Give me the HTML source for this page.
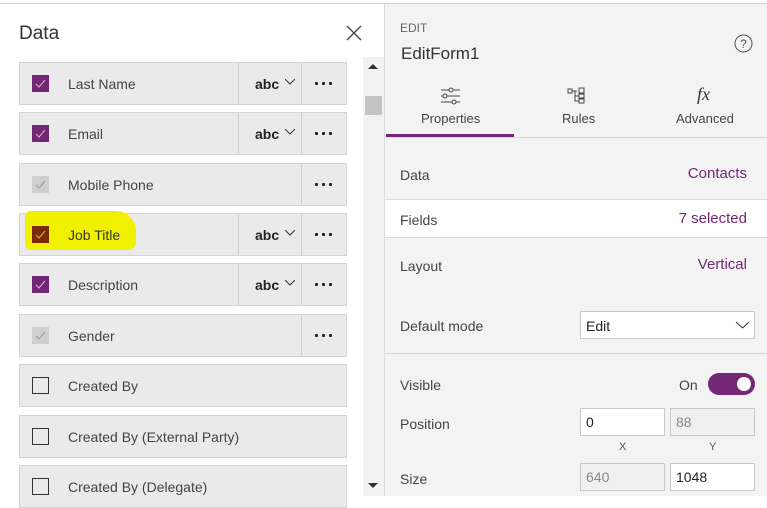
<!DOCTYPE html>
<html><head><style>
*{box-sizing:border-box;margin:0;padding:0}
body{width:767px;height:496px;overflow:hidden;background:#fff;font-family:"Liberation Sans",sans-serif;position:relative;color:#333}
.abs{position:absolute}
.row{position:absolute;left:19px;width:328px;height:43px;background:#eaeaea;border:1px solid #d4d4d4}
.row .cb{position:absolute;left:12px;top:12px;width:17px;height:17px}
.cb.p{background:#742774}
.cb.g{background:#cfcfcf}
.cb.e{border:1.5px solid #333;background:#eaeaea}
.cb svg{position:absolute;left:3px;top:4px}
.row .t{position:absolute;left:48px;top:13px;font-size:14px;color:#444}
.row .abc{position:absolute;left:218px;top:0;width:63px;height:41px;border-left:1px solid #d0d0d0}
.row .abc b{position:absolute;left:16px;top:13px;font-size:14px;color:#222}
.row .abc svg{position:absolute;left:46px;top:16px}
.row .dots{position:absolute;left:281px;top:0;width:45px;height:41px;border-left:1px solid #d0d0d0}
.dots i{position:absolute;top:19px;width:3px;height:3px;background:#222;border-radius:1px}
.lbl{position:absolute;left:400px;font-size:14px;color:#444}
.val{position:absolute;right:20px;font-size:15px;color:#742774}
.inp{position:absolute;height:28px;border:1px solid #c8c8c8;background:#fff;font-size:14px;padding:5px 0 0 5px;color:#222}
.inp.d{background:#f0f0f0;color:#888}
</style></head><body>
<div class="abs" style="left:0;top:3px;width:767px;height:1px;background:#d8d8d8"></div>
<div class="abs" style="left:19px;top:23px;font-size:19px;color:#333">Data</div>
<svg class="abs" style="left:346px;top:25px" width="16" height="16"><path d="M1 1L15 15M15 1L1 15" stroke="#444" stroke-width="1.3"/></svg>
<div class="abs" style="left:363px;top:57px;width:21px;height:439px;background:#f2f2f2"></div>
<svg class="abs" style="left:368px;top:63px" width="10" height="8"><path d="M0 6L5 1L10 6Z" fill="#333"/></svg>
<div class="abs" style="left:365px;top:96px;width:17px;height:19px;background:#c4c4c4"></div>
<svg class="abs" style="left:368px;top:482px" width="10" height="8"><path d="M0 1L5 6L10 1Z" fill="#333"/></svg>
<div class="abs" style="left:384px;top:4px;width:1px;height:492px;background:#dcdcdc"></div>

<div class="row" style="top:62px"><div class="cb p"><svg width="11" height="9"><path d="M1 5L4 8L10 1" stroke="#d6b8d6" fill="none"/></svg></div><div class="t">Last Name</div><div class="abc"><b>abc</b><svg width="10" height="6"><path d="M0 0L5 5L10 0" stroke="#333" fill="none"/></svg></div><div class="dots"><i style="left:13px"></i><i style="left:20px"></i><i style="left:27px"></i></div></div>
<div class="row" style="top:112px"><div class="cb p"><svg width="11" height="9"><path d="M1 5L4 8L10 1" stroke="#d6b8d6" fill="none"/></svg></div><div class="t">Email</div><div class="abc"><b>abc</b><svg width="10" height="6"><path d="M0 0L5 5L10 0" stroke="#333" fill="none"/></svg></div><div class="dots"><i style="left:13px"></i><i style="left:20px"></i><i style="left:27px"></i></div></div>
<div class="row" style="top:163px"><div class="cb g"><svg width="11" height="9"><path d="M1 5L4 8L10 1" stroke="#999" fill="none"/></svg></div><div class="t">Mobile Phone</div><div class="dots"><i style="left:13px"></i><i style="left:20px"></i><i style="left:27px"></i></div></div>
<div class="row" style="top:213px"><div class="abs" style="left:5px;top:-3px;width:111px;height:39px;background:#f0f000;border-radius:6px 20px 8px 6px"></div><div class="cb" style="background:#7a2a10"><svg width="11" height="9"><path d="M1 5L4 8L10 1" stroke="#e0c000" fill="none"/></svg></div><div class="t" style="color:#333">Job Title</div><div class="abc"><b>abc</b><svg width="10" height="6"><path d="M0 0L5 5L10 0" stroke="#333" fill="none"/></svg></div><div class="dots"><i style="left:13px"></i><i style="left:20px"></i><i style="left:27px"></i></div></div>
<div class="row" style="top:263px"><div class="cb p"><svg width="11" height="9"><path d="M1 5L4 8L10 1" stroke="#d6b8d6" fill="none"/></svg></div><div class="t">Description</div><div class="abc"><b>abc</b><svg width="10" height="6"><path d="M0 0L5 5L10 0" stroke="#333" fill="none"/></svg></div><div class="dots"><i style="left:13px"></i><i style="left:20px"></i><i style="left:27px"></i></div></div>
<div class="row" style="top:314px"><div class="cb g"><svg width="11" height="9"><path d="M1 5L4 8L10 1" stroke="#999" fill="none"/></svg></div><div class="t">Gender</div><div class="dots"><i style="left:13px"></i><i style="left:20px"></i><i style="left:27px"></i></div></div>
<div class="row" style="top:364px"><div class="cb e"></div><div class="t">Created By</div></div>
<div class="row" style="top:415px"><div class="cb e"></div><div class="t">Created By (External Party)</div></div>
<div class="row" style="top:465px"><div class="cb e"></div><div class="t">Created By (Delegate)</div></div>

<div class="abs" style="left:385px;top:4px;width:382px;height:492px;background:#f3f3f3"></div>
<div class="abs" style="left:400px;top:21px;font-size:12px;color:#666">EDIT</div>
<div class="abs" style="left:401px;top:44px;font-size:17px;color:#333">EditForm1</div>
<svg class="abs" style="left:734px;top:34px" width="19" height="19"><circle cx="9.5" cy="9.5" r="8.5" stroke="#555" fill="none"/><text x="9.5" y="14" font-size="12" text-anchor="middle" fill="#555" font-family="Liberation Sans">?</text></svg>
<svg class="abs" style="left:440px;top:87px" width="21" height="18" stroke="#444" fill="none"><path d="M1 3H20M1 9H20M1 15H20"/><circle cx="11" cy="3" r="2" fill="#f3f3f3"/><circle cx="5" cy="9" r="2" fill="#f3f3f3"/><circle cx="14" cy="15" r="2" fill="#f3f3f3"/></svg>
<svg class="abs" style="left:567px;top:87px" width="20" height="17" stroke="#444" fill="none"><rect x="1" y="2" width="4" height="4"/><path d="M5 4H10M8 4V14H12M8 9H12"/><rect x="12" y="1" width="5" height="5"/><rect x="12" y="7" width="5" height="4"/><rect x="12" y="12" width="5" height="4"/></svg>
<div class="abs" style="left:697px;top:84px;font-family:'Liberation Serif',serif;font-style:italic;font-size:18px;color:#333">fx</div>
<div class="abs" style="left:421px;top:111px;font-size:13px;color:#444">Properties</div>
<div class="abs" style="left:562px;top:111px;font-size:13px;color:#444">Rules</div>
<div class="abs" style="left:676px;top:111px;font-size:13px;color:#444">Advanced</div>
<div class="abs" style="left:385px;top:137px;width:382px;height:1px;background:#d8d8d8"></div>
<div class="abs" style="left:386px;top:134px;width:128px;height:3px;background:#742774"></div>
<div class="lbl" style="top:167px">Data</div><div class="val" style="top:165px">Contacts</div>
<div class="abs" style="left:385px;top:199px;width:382px;height:39px;background:#fff;border-top:1px solid #dadada;border-bottom:1px solid #dadada"></div>
<div class="lbl" style="top:212px">Fields</div><div class="val" style="top:210px">7 selected</div>
<div class="lbl" style="top:258px">Layout</div><div class="val" style="top:256px">Vertical</div>
<div class="lbl" style="top:318px">Default mode</div>
<div class="inp" style="left:580px;top:311px;width:175px;padding-top:6px">Edit</div>
<svg class="abs" style="left:735px;top:321px" width="15" height="8"><path d="M1 1L7.5 7L14 1" stroke="#333" fill="none"/></svg>
<div class="abs" style="left:385px;top:353px;width:382px;height:1px;background:#d6d6d6"></div>
<div class="lbl" style="top:377px">Visible</div>
<div class="abs" style="left:679px;top:377px;font-size:14px;color:#444">On</div>
<div class="abs" style="left:708px;top:373px;width:47px;height:22px;border-radius:11px;background:#742774"></div>
<div class="abs" style="left:737px;top:377px;width:14px;height:14px;border-radius:7px;background:#fff"></div>
<div class="lbl" style="top:416px">Position</div>
<div class="inp" style="left:580px;top:408px;width:85px">0</div>
<div class="inp d" style="left:670px;top:408px;width:85px">88</div>
<div class="abs" style="left:619px;top:441px;font-size:11px;color:#555">X</div>
<div class="abs" style="left:709px;top:441px;font-size:11px;color:#555">Y</div>
<div class="lbl" style="top:471px">Size</div>
<div class="inp d" style="left:580px;top:463px;width:85px">640</div>
<div class="inp" style="left:670px;top:463px;width:85px">1048</div>
</body></html>
